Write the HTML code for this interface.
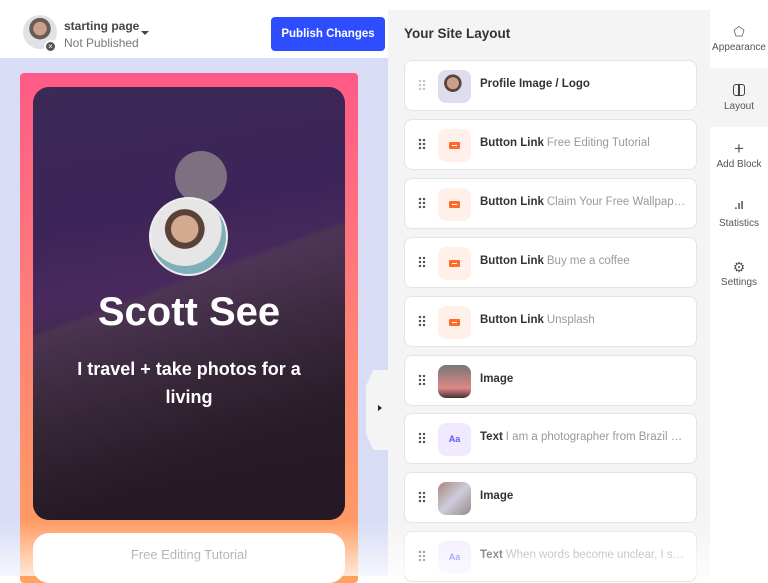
<!DOCTYPE html>
<html><head><style>
*{margin:0;padding:0;box-sizing:border-box}
body{width:768px;height:576px;overflow:hidden;position:relative;font-family:"Liberation Sans",sans-serif;background:#fff}
.lb{position:absolute;left:0;top:58px;width:390px;height:518px;background:#d8dcf5}
.hdr{position:absolute;left:0;top:0;width:390px;height:58px;background:#fff}
.av{position:absolute;left:23px;top:15px;width:34px;height:34px;border-radius:50%;background:radial-gradient(circle at 50% 40%,#c9a08a 0 25%,#6c5a55 26% 40%,#dfe2e6 41%)}
.x{position:absolute;left:44px;top:40px;width:13px;height:13px;border-radius:50%;background:#555;border:2px solid #fff;color:#fff;font-size:8px;line-height:9px;text-align:center}
.pub{position:absolute;left:271px;top:17px;width:114px;height:34px;background:#2e4dff;border-radius:4px;color:#fff;font-size:11.5px;font-weight:bold;text-align:center;line-height:34px}
.card{position:absolute;left:20px;top:73px;width:338px;height:510px;border-radius:4px;background:linear-gradient(#ff5a87,#ff7e78 45%,#ffa25e)}
.ph{position:absolute;left:33px;top:87px;width:312px;height:433px;border-radius:16px;overflow:hidden;background:linear-gradient(170deg,#3a2a55 0%,#3d2458 30%,#4a2a5e 45%,#2e2030 70%,#120a12 100%)}
.bld{position:absolute;left:0;top:0;width:312px;height:433px;background:linear-gradient(160deg,transparent 45%,rgba(80,60,80,.6) 46%,rgba(40,28,40,.8) 80%)}
.moon{position:absolute;left:142px;top:64px;width:52px;height:52px;border-radius:50%;background:#7d7080}
.pav{position:absolute;left:149px;top:197px;width:79px;height:79px;border-radius:50%;background:radial-gradient(circle at 45% 40%,#d3a98f 0 22%,#5a4238 23% 32%,#e6e6e6 33% 60%,#7fb0b8 61%);border:2px solid #eee}
.nm{position:absolute;left:20px;width:338px;top:290px;text-align:center;color:#fff;font-size:40px;font-weight:bold}
.bio{position:absolute;left:60px;width:258px;top:355px;text-align:center;color:#fff;font-size:18px;font-weight:bold;line-height:28px}
.btn{position:absolute;left:33px;top:533px;width:312px;height:50px;border-radius:16px;background:#fff;color:#777;font-size:13px;text-align:center;line-height:44px}
.rp{position:absolute;left:388px;top:10px;width:322px;height:566px;background:#f4f4f4}
.tab{position:absolute;left:366px;top:370px;width:24px;height:80px;background:#f4f4f4;clip-path:polygon(30% 0,100% 0,100% 100%,30% 100%,0 80%,0 20%)}
.tt{position:absolute;left:404px;top:26px;font-size:13.5px;font-weight:bold;color:#333}
.row{position:absolute;left:404px;width:293px;height:51px;background:#fff;border:1px solid #e4e4e4;border-radius:8px;font-size:11.5px;color:#333}
.row .d{position:absolute;left:13px;top:18px;width:8px;height:12px;background-image:radial-gradient(circle,#555 1.1px,transparent 1.4px);background-size:4px 4px}
.row .ic{position:absolute;left:33px;top:9px;width:33px;height:33px;border-radius:8px;background:#fff0ea}
.row .ic i{position:absolute;left:11px;top:13px;width:11px;height:7px;background:#ff6a2b;border-radius:1px}
.row .ic i:after{content:"";position:absolute;left:3px;top:3px;width:5px;height:1px;background:#fff}
.row .t{position:absolute;left:75px;top:17px;white-space:nowrap}
.row b{font-weight:bold;color:#333}
.row span{color:#999;margin-left:3px}
.aa{background:#f1eaff!important;color:#5a5aff;font-size:9px;font-weight:bold;text-align:center;line-height:33px}
.sb{position:absolute;left:710px;top:0;width:58px;height:576px;background:#fff}
.si{position:absolute;left:710px;width:58px;text-align:center;font-size:10px;color:#555}
.fade{position:absolute;left:0;top:520px;width:768px;height:56px;background:linear-gradient(rgba(255,255,255,0),rgba(255,255,255,.75))}
</style></head><body>
<div class="lb"></div>
<div class="hdr"></div>
<div class="av"></div><div class="x">×</div>
<div style="position:absolute;left:64px;top:19px;font-size:12px;font-weight:bold;color:#444">starting page</div>
<div style="position:absolute;left:64px;top:36px;font-size:12px;color:#777">Not Published</div>
<div style="position:absolute;left:141px;top:31px;border:4px solid transparent;border-top:4px solid #444;border-bottom:0"></div>
<div class="pub">Publish Changes</div>
<div class="card"></div>
<div class="ph"><div class="bld"></div><div class="moon"></div></div>
<div class="pav"></div>
<div class="nm">Scott See</div>
<div class="bio">I travel + take photos for a living</div>
<div class="btn">Free Editing Tutorial</div>
<div class="rp"></div>
<div class="tab"></div>
<div style="position:absolute;left:378px;top:405px;border:3px solid transparent;border-left:4px solid #222;border-right:0"></div>
<div class="tt">Your Site Layout</div>

<div class="row" style="top:60px"><div class="d" style="opacity:.35"></div><div class="ic" style="background:radial-gradient(circle at 45% 40%,#c9a08a 0 22%,#5a4238 23% 32%,#dde 33%)"></div><div class="t"><b>Profile Image / Logo</b></div></div>
<div class="row" style="top:119px"><div class="d"></div><div class="ic"><i></i></div><div class="t"><b>Button Link</b><span>Free Editing Tutorial</span></div></div>
<div class="row" style="top:178px"><div class="d"></div><div class="ic"><i></i></div><div class="t"><b>Button Link</b><span>Claim Your Free Wallpap…</span></div></div>
<div class="row" style="top:237px"><div class="d"></div><div class="ic"><i></i></div><div class="t"><b>Button Link</b><span>Buy me a coffee</span></div></div>
<div class="row" style="top:296px"><div class="d"></div><div class="ic"><i></i></div><div class="t"><b>Button Link</b><span>Unsplash</span></div></div>
<div class="row" style="top:355px"><div class="d"></div><div class="ic" style="background:linear-gradient(#777,#d88 70%,#433)"></div><div class="t"><b>Image</b></div></div>
<div class="row" style="top:413px"><div class="d"></div><div class="ic aa">Aa</div><div class="t"><b>Text</b><span>I am a photographer from Brazil …</span></div></div>
<div class="row" style="top:472px"><div class="d"></div><div class="ic" style="background:linear-gradient(135deg,#a87 ,#ccd 50%,#988)"></div><div class="t"><b>Image</b></div></div>
<div class="row" style="top:531px"><div class="d"></div><div class="ic aa">Aa</div><div class="t"><b>Text</b><span>When words become unclear, I s…</span></div></div>

<div class="sb"></div>
<div style="position:absolute;left:710px;top:68px;width:58px;height:59px;background:#f4f4f4"></div>
<div class="si" style="top:24px;font-size:13px">⬠</div><div class="si" style="top:42px">Appearance</div>
<div style="position:absolute;left:733px;top:84px;width:12px;height:12px;border:1.8px solid #444;border-radius:3px"></div>
<div style="position:absolute;left:738px;top:84px;width:1.8px;height:12px;background:#444"></div>
<div class="si" style="top:101px">Layout</div>
<div class="si" style="top:140px;font-size:17px;line-height:17px">+</div><div class="si" style="top:159px">Add Block</div>
<div class="si" style="top:200px;font-size:11px;font-weight:bold">.ıl</div><div class="si" style="top:218px">Statistics</div>
<div class="si" style="top:259px;font-size:14px">⚙</div><div class="si" style="top:277px">Settings</div>
<div class="fade"></div>
</body></html>
